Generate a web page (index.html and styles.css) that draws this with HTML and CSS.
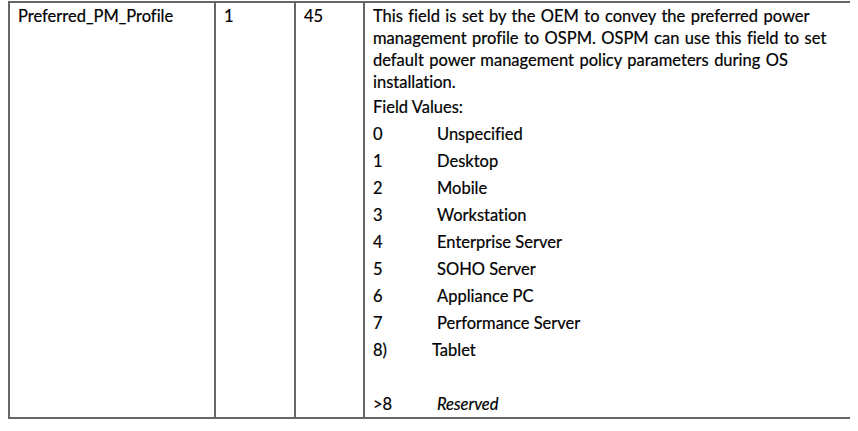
FILE: index.html
```html
<!DOCTYPE html>
<html>
<head>
<meta charset="utf-8">
<link rel="stylesheet" href="styles.css">
</head>
<body>
<table class="spec">
  <colgroup>
    <col class="c-name">
    <col class="c-len">
    <col class="c-off">
    <col class="c-desc">
  </colgroup>
  <tr>
    <td class="cell">Preferred_PM_Profile</td>
    <td class="cell">1</td>
    <td class="cell">45</td>
    <td class="cell desc">
      <p class="para">This field is set by the OEM to convey the preferred power management profile to OSPM. OSPM can use this field to set default power management policy parameters during OS installation.</p>
      <p class="label">Field Values:</p>
      <div class="values">
        <span class="num">0</span><span class="val">Unspecified</span>
        <span class="num">1</span><span class="val">Desktop</span>
        <span class="num">2</span><span class="val">Mobile</span>
        <span class="num">3</span><span class="val">Workstation</span>
        <span class="num">4</span><span class="val">Enterprise Server</span>
        <span class="num">5</span><span class="val">SOHO Server</span>
        <span class="num">6</span><span class="val">Appliance PC</span>
        <span class="num">7</span><span class="val">Performance Server</span>
        <span class="num">8)</span><span class="val shifted">Tablet</span>
        <span class="num"></span><span class="val"></span>
        <span class="num">&gt;8</span><span class="val reserved">Reserved</span>
      </div>
    </td>
  </tr>
</table>
</body>
</html>
```
FILE: styles.css
```css
html, body {
  background: #ffffff;
}
body {
  margin: 0 8px;
  padding-top: 1px;
  font-family: Lato, "Liberation Sans", sans-serif;
  font-size: 16.5px;
  font-variant-ligatures: none;
  color: #000000;
  -webkit-text-stroke: 0.2px #000000;
}
.spec {
  border-collapse: collapse;
  width: 842px;
  table-layout: fixed;
}
.c-name { width: 206px; }
.c-len { width: 80px; }
.c-off { width: 69px; }
.c-desc { width: 487px; }
.cell {
  border: 2px solid #666666;
  vertical-align: top;
  padding: 2px 8px 0 8px;
  line-height: 22px;
  height: 412px;
  box-sizing: border-box;
}
.para {
  margin: 0;
  word-spacing: 1.2px;
}
.label {
  margin: 3px 0 0 0;
}
.values {
  display: grid;
  grid-template-columns: 64px auto;
  grid-auto-rows: 27px;
  align-items: center;
  margin-top: 2px;
}
.shifted {
  margin-left: -5px;
}
.reserved {
  font-style: italic;
}
```
